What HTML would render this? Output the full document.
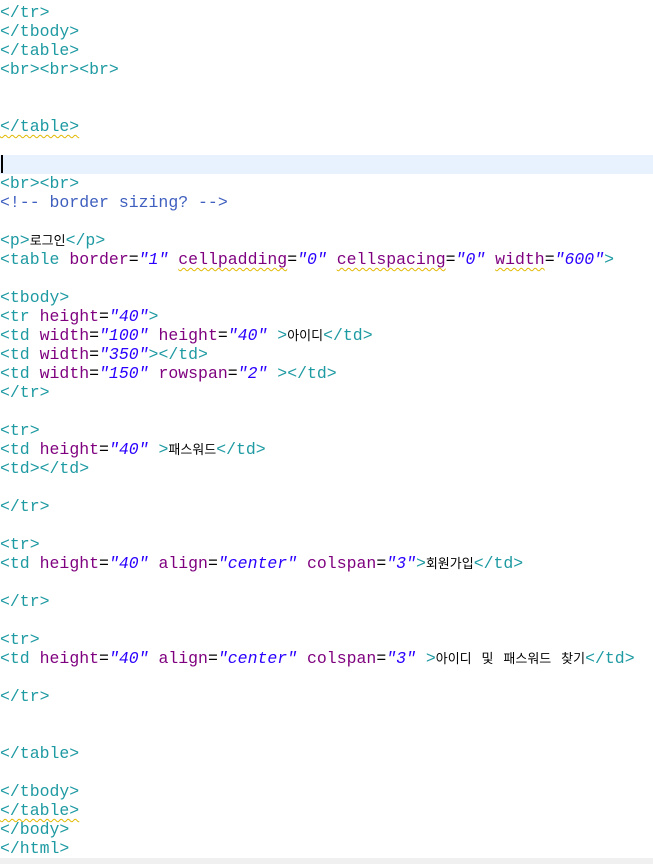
<!DOCTYPE html>
<html><head><meta charset="utf-8"><style>
body{margin:0;background:#fff;width:653px;height:864px;overflow:hidden;position:relative}
pre{margin:0;position:absolute;top:3px;left:0;font:16.5px/19px "Liberation Mono",monospace;color:#000}
.t{color:#1e9aa2}.a{color:#7f007f}.s{color:#2a00ff;font-style:italic}.c{color:#3f5fbf}
.k{font-family:"Noto Sans CJK KR","NanumGothic",sans-serif;font-size:13px;line-height:0}
.w{text-decoration:underline wavy #e0b800;text-decoration-thickness:1px;text-underline-offset:3px}
.hl{position:absolute;left:0;top:155px;width:653px;height:19px;background:#e8f2fe}
.cur{position:absolute;left:1px;top:155px;width:2px;height:18px;background:#000}
.bot{position:absolute;left:0;top:858px;width:653px;height:6px;background:#f0f0f0}
</style></head><body>
<div class="hl"></div><div class="cur"></div><div class="bot"></div>
<pre><span class="t">&lt;/tr&gt;
&lt;/tbody&gt;
&lt;/table&gt;
&lt;br&gt;&lt;br&gt;&lt;br&gt;</span>


<span class="t w">&lt;/table&gt;</span>


<span class="t">&lt;br&gt;&lt;br&gt;</span>
<span class="c">&lt;!-- border sizing? --&gt;</span>

<span class="t">&lt;p&gt;</span><span class="k">로그인</span><span class="t">&lt;/p&gt;</span>
<span class="t">&lt;table </span><span class="a">border</span>=<span class="s">"1"</span> <span class="a w">cellpadding</span>=<span class="s">"0"</span> <span class="a w">cellspacing</span>=<span class="s">"0"</span> <span class="a w">width</span>=<span class="s">"600"</span><span class="t">&gt;</span>

<span class="t">&lt;tbody&gt;</span>
<span class="t">&lt;tr </span><span class="a">height</span>=<span class="s">"40"</span><span class="t">&gt;</span>
<span class="t">&lt;td </span><span class="a">width</span>=<span class="s">"100"</span> <span class="a">height</span>=<span class="s">"40"</span> <span class="t">&gt;</span><span class="k">아이디</span><span class="t">&lt;/td&gt;</span>
<span class="t">&lt;td </span><span class="a">width</span>=<span class="s">"350"</span><span class="t">&gt;&lt;/td&gt;</span>
<span class="t">&lt;td </span><span class="a">width</span>=<span class="s">"150"</span> <span class="a">rowspan</span>=<span class="s">"2"</span> <span class="t">&gt;&lt;/td&gt;</span>
<span class="t">&lt;/tr&gt;</span>

<span class="t">&lt;tr&gt;</span>
<span class="t">&lt;td </span><span class="a">height</span>=<span class="s">"40"</span> <span class="t">&gt;</span><span class="k">패스워드</span><span class="t">&lt;/td&gt;</span>
<span class="t">&lt;td&gt;&lt;/td&gt;</span>

<span class="t">&lt;/tr&gt;</span>

<span class="t">&lt;tr&gt;</span>
<span class="t">&lt;td </span><span class="a">height</span>=<span class="s">"40"</span> <span class="a">align</span>=<span class="s">"center"</span> <span class="a">colspan</span>=<span class="s">"3"</span><span class="t">&gt;</span><span class="k">회원가입</span><span class="t">&lt;/td&gt;</span>

<span class="t">&lt;/tr&gt;</span>

<span class="t">&lt;tr&gt;</span>
<span class="t">&lt;td </span><span class="a">height</span>=<span class="s">"40"</span> <span class="a">align</span>=<span class="s">"center"</span> <span class="a">colspan</span>=<span class="s">"3"</span> <span class="t">&gt;</span><span class="k">아이디</span> <span class="k">및</span> <span class="k">패스워드</span> <span class="k">찾기</span><span class="t">&lt;/td&gt;</span>

<span class="t">&lt;/tr&gt;</span>


<span class="t">&lt;/table&gt;</span>

<span class="t">&lt;/tbody&gt;</span>
<span class="t w">&lt;/table&gt;</span>
<span class="t">&lt;/body&gt;
&lt;/html&gt;</span></pre>
</body></html>
